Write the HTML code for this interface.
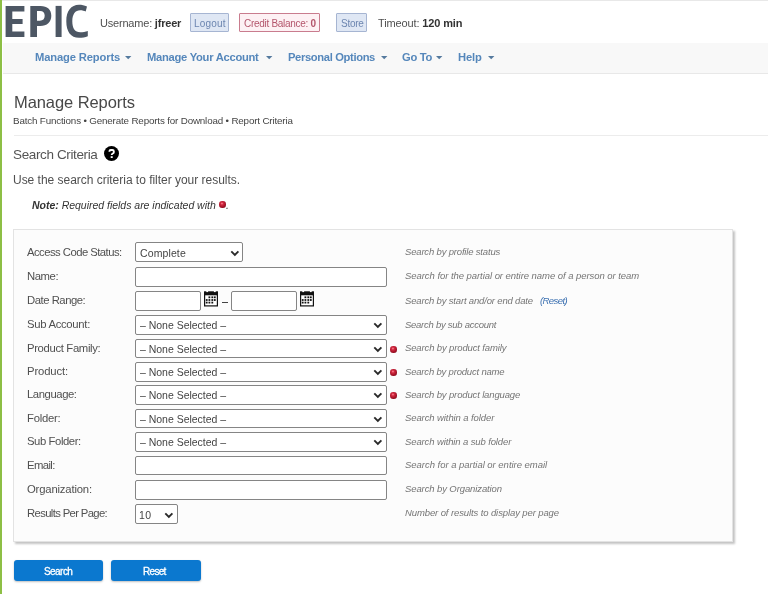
<!DOCTYPE html>
<html><head><meta charset="utf-8"><style>
html,body{margin:0;padding:0;background:#fff;}
body{width:768px;height:594px;position:relative;overflow:hidden;font-family:"Liberation Sans", sans-serif;}
.t{position:absolute;white-space:nowrap;line-height:1;font-family:"Liberation Sans", sans-serif;will-change:transform;}
.rdot{display:inline-block;width:6.5px;height:6.5px;border-radius:50%;background:radial-gradient(circle at 42% 36%,#ff8fa0 0,#d42a40 22%,#a8142a 55%,#6e0612 100%);}
</style></head><body>
<div style="position:absolute;left:0px;top:0px;width:768px;height:1px;box-sizing:border-box;background:#e8e8e8"></div>
<div style="position:absolute;left:0px;top:0px;width:2px;height:594px;box-sizing:border-box;background:#8dbf45"></div>
<svg style="position:absolute;left:0;top:0" width="96" height="42" viewBox="0 0 96 42"><g fill="#4d5764"><path d="M5.6,5.9 H24.4 V11.4 H12.3 V18.9 H22.6 V24 H12.3 V31.5 H24.4 V37 H5.6 Z"/><path fill-rule="evenodd" d="M30.3,37 V5.9 H40.6 C47.3,5.9 51.3,9.4 51.3,15.7 C51.3,22.2 47,25.9 40.3,25.9 H37 V37 Z M37,11.1 H40 C43.2,11.1 44.7,12.7 44.7,15.8 C44.7,19 43,20.7 39.8,20.7 H37 Z"/><path d="M55.6,5.9 H61.6 V37 H55.6 Z"/><path d="M87,6.4 C84.3,5.3 81.8,4.8 79,4.8 C71,4.8 66.3,11 66.3,21.3 C66.3,31.8 70.8,37.8 79,37.8 C82.4,37.8 85.2,37.3 87.8,36.3 V31 C85.5,31.8 82.8,32.3 80.2,32.3 C75,32.3 72.3,28.5 72.3,21.3 C72.3,14.2 75.3,10.3 80.2,10.3 C82.3,10.3 84.3,10.9 85.7,11.6 Z"/></g></svg>
<div style="position:absolute;left:190px;top:13px;width:39px;height:19px;box-sizing:border-box;background:#dfe7f4;border:1px solid #a6b5d2;border-radius:1px"></div>
<div style="position:absolute;left:239px;top:13px;width:81px;height:19px;box-sizing:border-box;background:#fdf1f4;border:1px solid #c97c8e;border-radius:1px"></div>
<div style="position:absolute;left:336px;top:13px;width:31px;height:19px;box-sizing:border-box;background:#dfe7f4;border:1px solid #a6b5d2;border-radius:1px"></div>
<div style="position:absolute;left:3px;top:43px;width:765px;height:31px;box-sizing:border-box;background:#f8f8f8;border-bottom:1px solid #e8e8e8"></div>
<svg style="position:absolute;left:125.3px;top:56.3px" width="7" height="4"><path d="M0 0 H6.4 L3.2 3.3 Z" fill="#557a9e"/></svg>
<svg style="position:absolute;left:266.3px;top:56.3px" width="7" height="4"><path d="M0 0 H6.4 L3.2 3.3 Z" fill="#557a9e"/></svg>
<svg style="position:absolute;left:380.90000000000003px;top:56.3px" width="7" height="4"><path d="M0 0 H6.4 L3.2 3.3 Z" fill="#557a9e"/></svg>
<svg style="position:absolute;left:436.3px;top:56.3px" width="7" height="4"><path d="M0 0 H6.4 L3.2 3.3 Z" fill="#557a9e"/></svg>
<svg style="position:absolute;left:488.3px;top:56.3px" width="7" height="4"><path d="M0 0 H6.4 L3.2 3.3 Z" fill="#557a9e"/></svg>
<div style="position:absolute;left:14px;top:135px;width:754px;height:1px;box-sizing:border-box;background:#ececec"></div>
<svg style="position:absolute;left:104px;top:146px" width="15" height="15" viewBox="0 0 15 15"><circle cx="7.5" cy="7.5" r="7.5" fill="#000"/><path d="M5.5 5.8 V5 C5.5 4.3 6 4 6.8 4 H8.4 C9.3 4 9.8 4.4 9.8 5.3 V6.2 C9.8 6.9 9.4 7.2 8.8 7.5 C8.1 7.9 7.7 8.2 7.7 9" fill="none" stroke="#fff" stroke-width="1.9"/><rect x="6.7" y="10.2" width="2" height="1.8" fill="#fff"/></svg>
<span class="rdot" style="position:absolute;left:219.3px;top:201.3px"></span>
<div style="position:absolute;left:13px;top:229px;width:720px;height:313px;box-sizing:border-box;background:#fcfcfc;border:1px solid #e3e3e3;box-shadow:2px 2px 2px #c4c4c4"></div>
<div style="position:absolute;left:135px;top:242px;width:108px;height:20px;box-sizing:border-box;background:#fff;border:1px solid #858585;border-radius:2px"></div>
<svg style="position:absolute;left:229.5px;top:250px" width="10" height="7" viewBox="0 0 10 7"><path d="M1.3 1.4 L4.85 4.9 L8.4 1.4" fill="none" stroke="#2a2a2a" stroke-width="1.9"/></svg>
<div style="position:absolute;left:135px;top:267px;width:252px;height:20px;box-sizing:border-box;background:#fff;border:1px solid #858585;border-radius:2px"></div>
<div style="position:absolute;left:135px;top:291px;width:65.5px;height:20px;box-sizing:border-box;background:#fff;border:1px solid #858585;border-radius:2px"></div>
<svg style="position:absolute;left:204px;top:291px" width="15" height="16" viewBox="0 0 15 16"><rect x="0.6" y="3" width="12.8" height="11.9" fill="#fff" stroke="#111" stroke-width="1.2"/><rect x="0" y="0.3" width="14" height="4" fill="#111"/><rect x="2.3" y="0" width="1.8" height="1.1" fill="#fff"/><rect x="9.9" y="0" width="1.8" height="1.1" fill="#fff"/><rect x="4.5" y="5.4" width="1.8" height="1.8" fill="#111"/><rect x="7.4" y="5.4" width="1.8" height="1.8" fill="#111"/><rect x="9.9" y="5.4" width="1.8" height="1.8" fill="#111"/><rect x="1.8" y="8.1" width="1.8" height="1.8" fill="#111"/><rect x="4.5" y="8.1" width="1.8" height="1.8" fill="#111"/><rect x="7.4" y="8.1" width="1.8" height="1.8" fill="#111"/><rect x="9.9" y="8.1" width="1.8" height="1.8" fill="#111"/><rect x="1.8" y="10.7" width="1.8" height="1.8" fill="#111"/><rect x="4.5" y="10.7" width="1.8" height="1.8" fill="#111"/><rect x="7.4" y="10.7" width="1.8" height="1.8" fill="#111"/></svg>
<div style="position:absolute;left:231px;top:291px;width:65.5px;height:20px;box-sizing:border-box;background:#fff;border:1px solid #858585;border-radius:2px"></div>
<svg style="position:absolute;left:300px;top:291px" width="15" height="16" viewBox="0 0 15 16"><rect x="0.6" y="3" width="12.8" height="11.9" fill="#fff" stroke="#111" stroke-width="1.2"/><rect x="0" y="0.3" width="14" height="4" fill="#111"/><rect x="2.3" y="0" width="1.8" height="1.1" fill="#fff"/><rect x="9.9" y="0" width="1.8" height="1.1" fill="#fff"/><rect x="4.5" y="5.4" width="1.8" height="1.8" fill="#111"/><rect x="7.4" y="5.4" width="1.8" height="1.8" fill="#111"/><rect x="9.9" y="5.4" width="1.8" height="1.8" fill="#111"/><rect x="1.8" y="8.1" width="1.8" height="1.8" fill="#111"/><rect x="4.5" y="8.1" width="1.8" height="1.8" fill="#111"/><rect x="7.4" y="8.1" width="1.8" height="1.8" fill="#111"/><rect x="9.9" y="8.1" width="1.8" height="1.8" fill="#111"/><rect x="1.8" y="10.7" width="1.8" height="1.8" fill="#111"/><rect x="4.5" y="10.7" width="1.8" height="1.8" fill="#111"/><rect x="7.4" y="10.7" width="1.8" height="1.8" fill="#111"/></svg>
<div style="position:absolute;left:222px;top:302px;width:6px;height:1px;box-sizing:border-box;background:#444"></div>
<div style="position:absolute;left:135px;top:315px;width:252px;height:20px;box-sizing:border-box;background:#fff;border:1px solid #858585;border-radius:2px"></div>
<svg style="position:absolute;left:373px;top:322px" width="10" height="7" viewBox="0 0 10 7"><path d="M1.3 1.4 L4.85 4.9 L8.4 1.4" fill="none" stroke="#2a2a2a" stroke-width="1.9"/></svg>
<div style="position:absolute;left:135px;top:339px;width:252px;height:19px;box-sizing:border-box;background:#fff;border:1px solid #858585;border-radius:2px"></div>
<svg style="position:absolute;left:373px;top:346px" width="10" height="7" viewBox="0 0 10 7"><path d="M1.3 1.4 L4.85 4.9 L8.4 1.4" fill="none" stroke="#2a2a2a" stroke-width="1.9"/></svg>
<span class="rdot" style="position:absolute;left:390.4px;top:346.3px"></span>
<div style="position:absolute;left:135px;top:362px;width:252px;height:20px;box-sizing:border-box;background:#fff;border:1px solid #858585;border-radius:2px"></div>
<svg style="position:absolute;left:373px;top:369px" width="10" height="7" viewBox="0 0 10 7"><path d="M1.3 1.4 L4.85 4.9 L8.4 1.4" fill="none" stroke="#2a2a2a" stroke-width="1.9"/></svg>
<span class="rdot" style="position:absolute;left:390.4px;top:369.3px"></span>
<div style="position:absolute;left:135px;top:385px;width:252px;height:20px;box-sizing:border-box;background:#fff;border:1px solid #858585;border-radius:2px"></div>
<svg style="position:absolute;left:373px;top:392px" width="10" height="7" viewBox="0 0 10 7"><path d="M1.3 1.4 L4.85 4.9 L8.4 1.4" fill="none" stroke="#2a2a2a" stroke-width="1.9"/></svg>
<span class="rdot" style="position:absolute;left:390.4px;top:392.3px"></span>
<div style="position:absolute;left:135px;top:409px;width:252px;height:19px;box-sizing:border-box;background:#fff;border:1px solid #858585;border-radius:2px"></div>
<svg style="position:absolute;left:373px;top:416px" width="10" height="7" viewBox="0 0 10 7"><path d="M1.3 1.4 L4.85 4.9 L8.4 1.4" fill="none" stroke="#2a2a2a" stroke-width="1.9"/></svg>
<div style="position:absolute;left:135px;top:432px;width:252px;height:20px;box-sizing:border-box;background:#fff;border:1px solid #858585;border-radius:2px"></div>
<svg style="position:absolute;left:373px;top:439px" width="10" height="7" viewBox="0 0 10 7"><path d="M1.3 1.4 L4.85 4.9 L8.4 1.4" fill="none" stroke="#2a2a2a" stroke-width="1.9"/></svg>
<div style="position:absolute;left:135px;top:456px;width:252px;height:19px;box-sizing:border-box;background:#fff;border:1px solid #858585;border-radius:2px"></div>
<div style="position:absolute;left:135px;top:480px;width:252px;height:20px;box-sizing:border-box;background:#fff;border:1px solid #858585;border-radius:2px"></div>
<div style="position:absolute;left:135px;top:504px;width:43px;height:20px;box-sizing:border-box;background:#fff;border:1px solid #858585;border-radius:2px"></div>
<svg style="position:absolute;left:164px;top:511.5px" width="10" height="7" viewBox="0 0 10 7"><path d="M1.3 1.4 L4.85 4.9 L8.4 1.4" fill="none" stroke="#2a2a2a" stroke-width="1.9"/></svg>
<div style="position:absolute;left:14px;top:560px;width:89px;height:21px;box-sizing:border-box;background:#0b78cf;border-radius:3px;box-shadow:0 1px 2px rgba(0,0,0,.25)"></div>
<div style="position:absolute;left:111px;top:560px;width:90px;height:21px;box-sizing:border-box;background:#0b78cf;border-radius:3px;box-shadow:0 1px 2px rgba(0,0,0,.25)"></div>
<div class="t" style="left:100.00px;top:17.69px;font-size:11px;color:#505050;font-weight:normal;font-style:normal;letter-spacing:-0.200px;">Username: <b style="color:#333">jfreer</b></div>
<div class="t" style="left:193.80px;top:18.54px;font-size:10px;color:#6d86b0;font-weight:normal;font-style:normal;letter-spacing:0.180px;">Logout</div>
<div class="t" style="left:243.80px;top:18.54px;font-size:10px;color:#b4566c;font-weight:normal;font-style:normal;letter-spacing:-0.287px;">Credit Balance: <b>0</b></div>
<div class="t" style="left:340.80px;top:18.54px;font-size:10px;color:#6d86b0;font-weight:normal;font-style:normal;letter-spacing:-0.275px;">Store</div>
<div class="t" style="left:378.00px;top:17.69px;font-size:11px;color:#505050;font-weight:normal;font-style:normal;letter-spacing:-0.133px;">Timeout: <b style="color:#333">120 min</b></div>
<div class="t" style="left:35.40px;top:51.52px;font-size:11.2px;color:#5587bb;font-weight:bold;font-style:normal;letter-spacing:-0.138px;">Manage Reports</div>
<div class="t" style="left:147.40px;top:51.52px;font-size:11.2px;color:#5587bb;font-weight:bold;font-style:normal;letter-spacing:-0.267px;">Manage Your Account</div>
<div class="t" style="left:288.20px;top:51.52px;font-size:11.2px;color:#5587bb;font-weight:bold;font-style:normal;letter-spacing:-0.353px;">Personal Options</div>
<div class="t" style="left:402.00px;top:51.52px;font-size:11.2px;color:#5587bb;font-weight:bold;font-style:normal;letter-spacing:-0.300px;">Go To</div>
<div class="t" style="left:458.00px;top:51.52px;font-size:11.2px;color:#5587bb;font-weight:bold;font-style:normal;letter-spacing:-0.167px;">Help</div>
<div class="t" style="left:14.20px;top:93.53px;font-size:16.5px;color:#484848;font-weight:normal;font-style:normal;letter-spacing:-0.077px;">Manage Reports</div>
<div class="t" style="left:13.00px;top:116.10px;font-size:9.8px;color:#444;font-weight:normal;font-style:normal;letter-spacing:-0.158px;">Batch Functions &bull; Generate Reports for Download &bull; Report Criteria</div>
<div class="t" style="left:12.60px;top:147.57px;font-size:13.5px;color:#555;font-weight:normal;font-style:normal;letter-spacing:-0.371px;">Search Criteria</div>
<div class="t" style="left:13.00px;top:174.34px;font-size:12px;color:#505050;font-weight:normal;font-style:normal;letter-spacing:-0.022px;">Use the search criteria to filter your results.</div>
<div class="t" style="left:31.60px;top:199.61px;font-size:10.5px;color:#333;font-weight:normal;font-style:italic;letter-spacing:-0.018px;"><b>Note:</b> Required fields are indicated with</div>
<div class="t" style="left:226.00px;top:199.61px;font-size:10.5px;color:#333;font-weight:normal;font-style:italic;letter-spacing:0.000px;">.</div>
<div class="t" style="left:27.20px;top:246.83px;font-size:11.3px;color:#505050;font-weight:normal;font-style:normal;letter-spacing:-0.539px;">Access Code Status:</div>
<div class="t" style="left:405.00px;top:247.36px;font-size:9.5px;color:#757575;font-weight:normal;font-style:italic;letter-spacing:-0.174px;">Search by profile status</div>
<div class="t" style="left:139.60px;top:247.81px;font-size:10.5px;color:#444;font-weight:normal;font-style:normal;letter-spacing:0.114px;">Complete</div>
<div class="t" style="left:27.00px;top:270.73px;font-size:11.3px;color:#505050;font-weight:normal;font-style:normal;letter-spacing:-0.425px;">Name:</div>
<div class="t" style="left:405.00px;top:271.26px;font-size:9.5px;color:#757575;font-weight:normal;font-style:italic;letter-spacing:-0.052px;">Search for the partial or entire name of a person or team</div>
<div class="t" style="left:27.00px;top:295.03px;font-size:11.3px;color:#505050;font-weight:normal;font-style:normal;letter-spacing:-0.470px;">Date Range:</div>
<div class="t" style="left:405.00px;top:295.56px;font-size:9.5px;color:#757575;font-weight:normal;font-style:italic;letter-spacing:-0.167px;">Search by start and/or end date</div>
<div class="t" style="left:540.00px;top:295.56px;font-size:9.5px;color:#3a6fb0;font-weight:normal;font-style:italic;letter-spacing:-0.583px;">(Reset)</div>
<div class="t" style="left:27.00px;top:319.23px;font-size:11.3px;color:#505050;font-weight:normal;font-style:normal;letter-spacing:-0.300px;">Sub Account:</div>
<div class="t" style="left:405.00px;top:319.76px;font-size:9.5px;color:#757575;font-weight:normal;font-style:italic;letter-spacing:-0.265px;">Search by sub account</div>
<div class="t" style="left:139.60px;top:320.11px;font-size:10.5px;color:#444;font-weight:normal;font-style:normal;letter-spacing:-0.019px;">&ndash; None Selected &ndash;</div>
<div class="t" style="left:27.00px;top:342.73px;font-size:11.3px;color:#505050;font-weight:normal;font-style:normal;letter-spacing:-0.343px;">Product Family:</div>
<div class="t" style="left:405.00px;top:343.26px;font-size:9.5px;color:#757575;font-weight:normal;font-style:italic;letter-spacing:-0.135px;">Search by product family</div>
<div class="t" style="left:139.60px;top:343.61px;font-size:10.5px;color:#444;font-weight:normal;font-style:normal;letter-spacing:-0.019px;">&ndash; None Selected &ndash;</div>
<div class="t" style="left:27.00px;top:366.13px;font-size:11.3px;color:#505050;font-weight:normal;font-style:normal;letter-spacing:-0.143px;">Product:</div>
<div class="t" style="left:405.00px;top:366.66px;font-size:9.5px;color:#757575;font-weight:normal;font-style:italic;letter-spacing:-0.186px;">Search by product name</div>
<div class="t" style="left:139.60px;top:367.01px;font-size:10.5px;color:#444;font-weight:normal;font-style:normal;letter-spacing:-0.019px;">&ndash; None Selected &ndash;</div>
<div class="t" style="left:27.00px;top:389.43px;font-size:11.3px;color:#505050;font-weight:normal;font-style:normal;letter-spacing:-0.425px;">Language:</div>
<div class="t" style="left:405.00px;top:389.96px;font-size:9.5px;color:#757575;font-weight:normal;font-style:italic;letter-spacing:-0.144px;">Search by product language</div>
<div class="t" style="left:139.60px;top:390.31px;font-size:10.5px;color:#444;font-weight:normal;font-style:normal;letter-spacing:-0.019px;">&ndash; None Selected &ndash;</div>
<div class="t" style="left:27.00px;top:412.73px;font-size:11.3px;color:#505050;font-weight:normal;font-style:normal;letter-spacing:-0.267px;">Folder:</div>
<div class="t" style="left:405.00px;top:413.26px;font-size:9.5px;color:#757575;font-weight:normal;font-style:italic;letter-spacing:-0.095px;">Search within a folder</div>
<div class="t" style="left:139.60px;top:413.61px;font-size:10.5px;color:#444;font-weight:normal;font-style:normal;letter-spacing:-0.019px;">&ndash; None Selected &ndash;</div>
<div class="t" style="left:27.00px;top:436.43px;font-size:11.3px;color:#505050;font-weight:normal;font-style:normal;letter-spacing:-0.420px;">Sub Folder:</div>
<div class="t" style="left:405.00px;top:436.96px;font-size:9.5px;color:#757575;font-weight:normal;font-style:italic;letter-spacing:-0.120px;">Search within a sub folder</div>
<div class="t" style="left:139.60px;top:437.31px;font-size:10.5px;color:#444;font-weight:normal;font-style:normal;letter-spacing:-0.019px;">&ndash; None Selected &ndash;</div>
<div class="t" style="left:27.00px;top:459.83px;font-size:11.3px;color:#505050;font-weight:normal;font-style:normal;letter-spacing:-0.600px;">Email:</div>
<div class="t" style="left:405.00px;top:460.36px;font-size:9.5px;color:#757575;font-weight:normal;font-style:italic;letter-spacing:-0.026px;">Search for a partial or entire email</div>
<div class="t" style="left:27.20px;top:483.83px;font-size:11.3px;color:#505050;font-weight:normal;font-style:normal;letter-spacing:-0.175px;">Organization:</div>
<div class="t" style="left:405.00px;top:484.36px;font-size:9.5px;color:#757575;font-weight:normal;font-style:italic;letter-spacing:-0.105px;">Search by Organization</div>
<div class="t" style="left:27.00px;top:507.93px;font-size:11.3px;color:#505050;font-weight:normal;font-style:normal;letter-spacing:-0.644px;">Results Per Page:</div>
<div class="t" style="left:405.00px;top:508.46px;font-size:9.5px;color:#757575;font-weight:normal;font-style:italic;letter-spacing:-0.106px;">Number of results to display per page</div>
<div class="t" style="left:138.80px;top:509.91px;font-size:10.5px;color:#444;font-weight:normal;font-style:normal;letter-spacing:0.500px;">10</div>
<div class="t" style="left:43.60px;top:567.13px;font-size:10px;color:#fff;font-weight:normal;font-style:normal;letter-spacing:-0.560px;-webkit-text-stroke:0.3px #fff">Search</div>
<div class="t" style="left:143.20px;top:567.13px;font-size:10px;color:#fff;font-weight:normal;font-style:normal;letter-spacing:-0.700px;-webkit-text-stroke:0.3px #fff">Reset</div>
</body></html>
